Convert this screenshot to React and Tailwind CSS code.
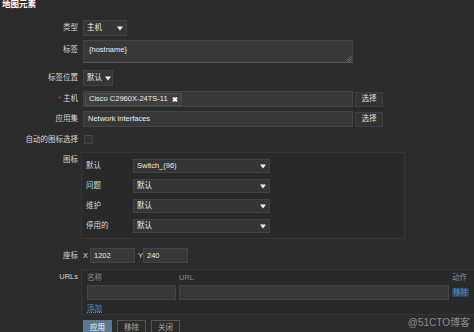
import React from "react";

const font = { fontFamily: '"Liberation Sans", "Noto Sans CJK SC", sans-serif' };

function Arrow() {
  return (
    <svg width="6" height="5" viewBox="0 0 6 5" className="shrink-0">
      <path d="M0 0.5h6L3 4.5z" fill="#f0f0f0" />
    </svg>
  );
}

function Select({ value, className }) {
  return (
    <div className={`flex items-center justify-between gap-[3px] whitespace-nowrap bg-[#353535] border border-[#424242] pl-[3px] pr-[3px] text-[#eeeeee] ${className}`}>
      <span>{value}</span>
      <Arrow />
    </div>
  );
}

function Row({ label, required, children, className = "items-center", labelClass = "" }) {
  return (
    <div className={`flex ${className}`}>
      <div className={`w-[78px] shrink-0 text-right whitespace-nowrap text-[#d6d6d6] ${labelClass}`}>
        {required && <span className="text-[#b84a4a] mr-[2px]">*</span>}
        {label}
      </div>
      <div className="ml-[5px] flex items-center">{children}</div>
    </div>
  );
}

function PickButton() {
  return (
    <div className="ml-[2px] w-[28px] h-[15px] flex items-center justify-center bg-[#333333] border border-[#404040] text-[#dddddd]">
      选择
    </div>
  );
}

export default function App() {
  const iconRows = [
    ["默认", "Switch_(96)"],
    ["问题", "默认"],
    ["维护", "默认"],
    ["停用的", "默认"],
  ];

  return (
    <div style={font} className="relative w-[474px] h-[332px] overflow-hidden bg-[#2b2b2b] text-[7.5px] leading-none">
      <div className="-mt-[1px] h-[9px] pl-[2px] text-[8.5px] leading-[10px] font-bold text-white">地图元素</div>

      <div className="flex flex-col">
        <Row label="类型" className="items-center mt-[12px]">
          <Select value="主机" className="w-[44px] h-[16px]" />
        </Row>

        <Row label="标签" className="items-start mt-[4px]" labelClass="pt-[6px]">
          <div className="relative w-[270px] h-[23px] bg-[#383838] border border-[#454545] border-b-[#555555] pl-[5px] pt-[5px] text-[#eeeeee]">
            {"{hostname}"}
            <svg width="7" height="7" viewBox="0 0 7 7" className="absolute right-0 bottom-0">
              <path d="M6.5 1L1 6.5M6.5 3.5L3.5 6.5M6.5 5.5L5.5 6.5" stroke="#888" strokeWidth="0.8" />
            </svg>
          </div>
        </Row>

        <Row label="标签位置" className="items-center mt-[7px]">
          <Select value="默认" className="w-[30px] h-[16px]" />
        </Row>

        <Row label="主机" required className="items-center mt-[5px]">
          <div className="w-[270px] h-[16px] bg-[#383838] border border-[#454545] flex items-center pl-[1px]">
            <div className="h-[13px] flex items-center gap-[4px] bg-[#3f3f3f] border border-[#4e4e4e] px-[3px] text-[#eeeeee]">
              Cisco C2960X-24TS-11
              <span className="text-[7px] font-bold text-white">✖</span>
            </div>
          </div>
          <PickButton />
        </Row>

        <Row label="应用集" className="items-center mt-[4px]">
          <div className="w-[270px] h-[16px] bg-[#383838] border border-[#454545] flex items-center pl-[4px] text-[#eeeeee]">
            Network interfaces
          </div>
          <PickButton />
        </Row>

        <Row label="自动的图标选择" className="items-center mt-[8px]">
          <div className="ml-[1px] w-[9px] h-[9px] bg-[#333333] border border-[#444444]" />
        </Row>

        <Row label="图标" className="items-start mt-[8px]" labelClass="pt-[4px]">
          <div className="-ml-[2px] w-[324px] h-[87px] border border-[#363636] bg-[#292929] pl-[4px] pt-[6px] flex flex-col gap-[6px]">
            {iconRows.map(([l, v]) => (
              <div key={l} className="flex items-center">
                <div className="w-[47px] text-[#d6d6d6]">{l}</div>
                <Select value={v} className="w-[137px] h-[14px]" />
              </div>
            ))}
          </div>
        </Row>

        <Row label="座标" className="items-center mt-[9px]">
          <span className="text-[#dddddd] w-[7px]">X</span>
          <div className="w-[45px] h-[15px] bg-[#383838] border border-[#454545] flex items-center pl-[3px] text-[#eeeeee]">1202</div>
          <span className="text-[#dddddd] ml-[3px] w-[5px]">Y</span>
          <div className="w-[45px] h-[15px] bg-[#383838] border border-[#454545] flex items-center pl-[3px] text-[#eeeeee]">240</div>
        </Row>

        <Row label="URLs" className="items-start mt-[6px]" labelClass="pt-[4px]">
          <div className="-ml-[2px] w-[400px] h-[46px] border border-[#363636] bg-[#292929] pl-[5px] pt-[4px]">
            <div className="flex text-[#8a8a8a] h-[11px]">
              <span className="w-[92px]">名称</span>
              <span className="w-[273px]">URL</span>
              <span>动作</span>
            </div>
            <div className="flex items-center">
              <div className="w-[89px] h-[15px] bg-[#383838] border border-[#454545]" />
              <div className="ml-[3px] w-[270px] h-[15px] bg-[#383838] border border-[#454545]" />
              <span className="ml-[3px] text-[#4a98c8] bg-[#2f4152] px-[1px] py-[1px]">移除</span>
            </div>
            <div className="mt-[5px] text-[#4a98c8] underline decoration-dotted">添加</div>
          </div>
        </Row>

        <div className="flex ml-[83px] mt-[5px] gap-[5px]">
          <div className="w-[29px] h-[16px] bg-[#5b7891] text-white flex items-center justify-center">应用</div>
          <div className="w-[29px] h-[16px] border border-[#555555] text-[#aaaaaa] flex items-center justify-center">移除</div>
          <div className="w-[29px] h-[16px] border border-[#555555] text-[#aaaaaa] flex items-center justify-center">关闭</div>
        </div>
      </div>

      <div className="absolute right-[4px] bottom-[4px] text-[10px] text-[#8c8c8c]">@51CTO博客</div>
    </div>
  );
}
